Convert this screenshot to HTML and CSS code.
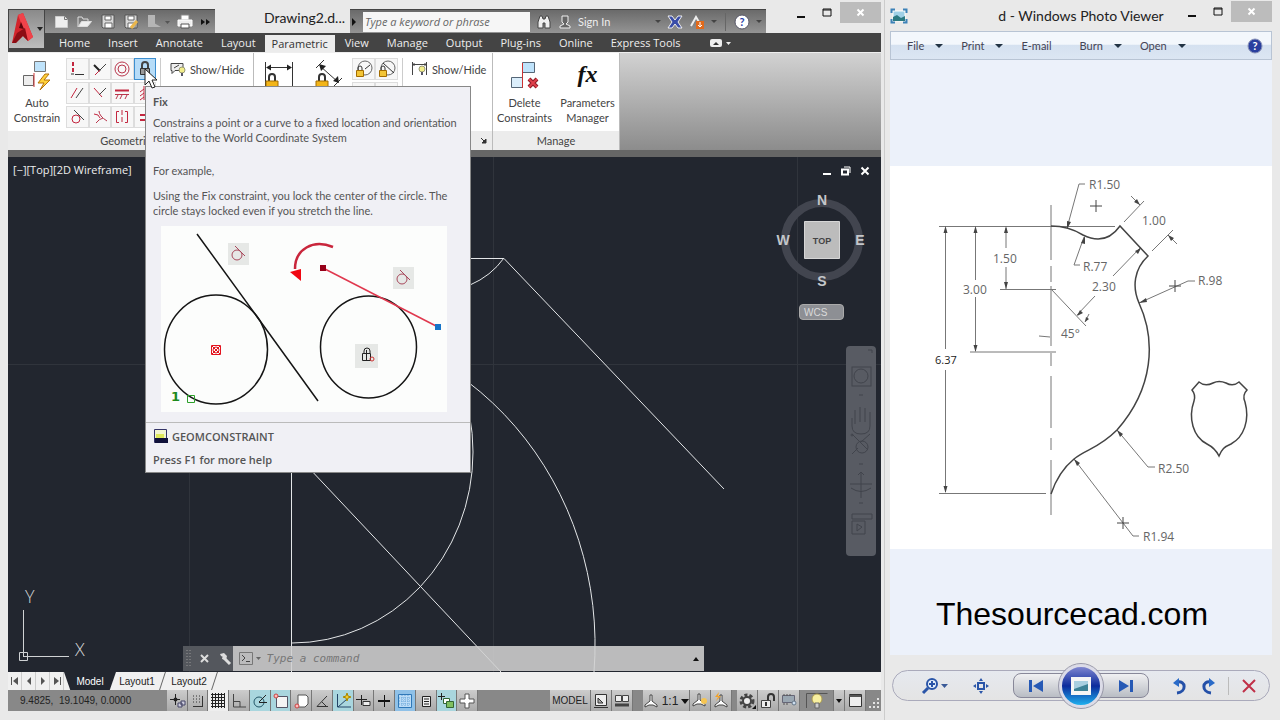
FILE: index.html
```html
<!DOCTYPE html>
<html lang="en">
<head>
<meta charset="UTF-8">
<meta name="viewport" content="width=device-width, initial-scale=1.0">
<title>Drawing2</title>
<link rel="stylesheet" href="styles.css">
</head>
<body>
<div class="desktop">

<!-- CAD window -->
<section class="cad">
  <header class="cad-title">
    <div class="quick">
      <button aria-label="New"><svg width="16" height="16"><path d="M1.500 2.500h9l3 3v8h-12z" fill="#eee" stroke="#ccc"/><path d="M10.500 2.500v3h3" fill="none" stroke="#777"/></svg></button>
      <button aria-label="Open"><svg width="16" height="16"><path d="M1 13V3h4l1 2h5v2" fill="none" stroke="#ddd"/><path d="M1.500 12.500l3-5h10l-4 5z" fill="#eee" stroke="#ddd"/></svg></button>
      <button aria-label="Save"><svg width="16" height="16"><path d="M2 1h12v13H3l-1-1z" fill="#d8d8d8" stroke="#555"/><path d="M5 2h6v4H5zM5 9h7v5H5z" fill="#fff" stroke="#666"/></svg></button>
      <button aria-label="Save As"><svg width="16" height="16"><path d="M2 1h12v13H3l-1-1z" fill="#d8d8d8" stroke="#555"/><path d="M5 2h6v4H5zM5 9h7v5H5z" fill="#fff" stroke="#666"/><path d="M8 14l6-7" stroke="#e9b64c" stroke-width="3"/></svg></button>
      <button aria-label="Plot"><svg width="24" height="16"><path d="M2 1h7v12H2zM8 9l7 4H5z" fill="#b5b5b5"/><path d="M19 7h5l-2.500 3z" fill="#555"/></svg></button>
      <button aria-label="Print"><svg width="16" height="16"><path d="M4 1h8v5H4z" fill="#fff" stroke="#888"/><path d="M1 6h14v6H1z" fill="#eee" stroke="#fff"/><path d="M4 10h8v4H4z" fill="#fff" stroke="#555"/></svg></button>
      <button aria-label="More"><svg width="12" height="10"><path d="M1 2l4 3-4 3zM6 2l4 3-4 3z" fill="#111"/></svg></button>
    </div>
    <h1 class="cad-name">Drawing2.d...</h1>
    <div class="info-bar">
      <button class="info-arrow" aria-label="Expand"><svg width="6" height="8"><path d="M1 0l4 4-4 4z" fill="#111"/></svg></button>
      <input class="search" type="text" placeholder="Type a keyword or phrase" aria-label="Search">
      <button aria-label="Find"><svg width="16" height="16"><path d="M2 14V8l2-6h2l1 3h2l1-3h2l2 6v6H9V9H7v5z" fill="#eee" stroke="#444"/></svg></button>
      <button class="sign-in"><svg width="14" height="16"><path d="M4 2h6v6l-2 2 4 2v2H2v-2l4-2-2-2z" fill="#666" stroke="#eee"/></svg>Sign In</button>
      <span class="caret push"></span>
      <button aria-label="Exchange"><svg width="16" height="14"><path d="M1 1h4l3 4 3-4h4l-4 6 4 6h-4L8 9l-3 4H1l4-6z" fill="#3a4da8" stroke="#eee"/></svg></button>
      <button aria-label="Updates"><svg width="16" height="16"><path d="M2 12l5-9 3 5" fill="none" stroke="#eee" stroke-width="2"/><path d="M7 7h8v8H7z" fill="#e06a1c"/><path d="M11 8v5M9 11l2 2 2-2" stroke="#fff" fill="none"/></svg></button>
      <span class="caret"></span>
      <span class="bar"></span>
      <button aria-label="Help"><svg width="16" height="16"><circle cx="8" cy="8" r="7" fill="#fff" stroke="#556"/><text x="8" y="12" text-anchor="middle" font-size="11" font-weight="700" fill="#2a41a8">?</text></svg></button>
      <span class="caret"></span>
    </div>
    <div class="win-buttons">
      <button aria-label="Minimize"><svg width="10" height="12"><path d="M1 9h8v2H1z" fill="#111"/></svg></button>
      <button aria-label="Maximize"><svg width="10" height="9"><path d="M1 1h8v7H1zM1 2h8" fill="none" stroke="#111"/></svg></button>
      <button class="close" aria-label="Close"><svg width="10" height="10"><path d="M1.500 1.500l6 6M7.500 1.500l-6 6" stroke="#fff" stroke-width="2"/></svg></button>
    </div>
  </header>

  <button class="app-menu" aria-label="Application menu">
    <svg width="36" height="38"><path d="M3 33L9 5l5-2 10 24-5 4-5-5-6 1-1 6z" fill="#d3242b"/><path d="M9 5l5-2 10 24-5 4z" fill="#f0434a"/><path d="M3 33l5-10 8-5 3 13-5-5-7 7z" fill="#8d0d14"/><path d="M10 18l2-6 3 7z" fill="#5e060c"/><path d="M28 17h6l-3 4z" fill="#222"/></svg>
  </button>

  <nav class="tabs">
    <button>Home</button>
    <button>Insert</button>
    <button>Annotate</button>
    <button>Layout</button>
    <button class="on">Parametric</button>
    <button>View</button>
    <button>Manage</button>
    <button>Output</button>
    <button>Plug-ins</button>
    <button>Online</button>
    <button>Express Tools</button>
    <button class="fold" aria-label="Minimize ribbon"><svg width="22" height="10"><rect y="1" width="12" height="8" rx="2" fill="#eee"/><path d="M3 7l3-3 3 3z" fill="#333"/><path d="M16 4h5l-2.500 3z" fill="#eee"/></svg></button>
  </nav>

  <div class="ribbon">
    <div class="panel geometric">
      <div class="panel-body">
        <button class="big">
          <svg width="32" height="34"><path d="M13.500 3.500h11v10h-11z" fill="#bfe3fb" stroke="#777"/><path d="M2.500 17.500h10v10h-10z" fill="#eee" stroke="#666"/><path d="M13 15v14" stroke="#c33"/><path d="M24 16l-7 9h6l-4 7 10-10h-6l5-6z" fill="#ffd23c" stroke="#b5720a"/></svg>
          <span>Auto<br>Constrain</span>
        </button>
        <div class="grid">
          <button aria-label="Coincident"><svg width="18" height="18"><path d="M5 2v10" stroke="#c3263f" stroke-width="2" stroke-dasharray="4 2"/><path d="M3 14h3M7 14.500h9" stroke="#333"/></svg></button>
          <button aria-label="Collinear"><svg width="18" height="18"><path d="M3 5l6 6" stroke="#222" stroke-width="2"/><path d="M4 15l5-5" stroke="#c3263f"/><path d="M9 10l6-6" stroke="#444"/></svg></button>
          <button aria-label="Concentric"><svg width="18" height="18" fill="none" stroke="#b9364c"><circle cx="9" cy="9" r="7"/><circle cx="9" cy="9" r="4"/></svg></button>
          <button aria-label="Fix" class="hot"><svg width="18" height="18"><path d="M6 9V5a3 3 0 0 1 6 0v4" fill="none" stroke="#444" stroke-width="2"/><path d="M4.500 8.500h9v6h-9z" fill="#999" stroke="#333"/></svg></button>
          <button aria-label="Parallel"><svg width="18" height="18"><path d="M3 14L9 4" stroke="#c3263f"/><path d="M8 14l7-10" stroke="#444"/></svg></button>
          <button aria-label="Perpendicular"><svg width="18" height="18"><path d="M3 4l8 9" stroke="#c3263f"/><path d="M15 4L8 11" stroke="#444" fill="none"/></svg></button>
          <button aria-label="Horizontal"><svg width="18" height="18"><path d="M2 6.500h14" stroke="#c3263f" stroke-width="2"/><path d="M2 10.500h14M5 11l-2 4M9 11l-2 4M14 11l-2 4" stroke="#b9364c"/></svg></button>
          <button aria-label="Vertical"><svg width="18" height="18"><path d="M8 2v14M12 2v14M8 5l-4 3M8 9l-4 3M8 13l-4 3" stroke="#c3263f"/></svg></button>
          <button aria-label="Tangent"><svg width="18" height="18" fill="none"><circle cx="8" cy="11" r="4" stroke="#c3263f"/><path d="M6 2l10 10" stroke="#444"/></svg></button>
          <button aria-label="Smooth"><svg width="18" height="18" fill="none"><path d="M3 6q5 0 6 4" stroke="#c3263f"/><path d="M8 3q0 5 8 10M5 15q3-4 7-5" stroke="#b9364c"/></svg></button>
          <button aria-label="Symmetric"><svg width="18" height="18" fill="none" stroke="#c3263f"><path d="M6 3.500H3.500v11H6M12 3.500h2.500v11H12"/><path d="M9 2v14" stroke-dasharray="5 2"/></svg></button>
          <button aria-label="Equal"><svg width="18" height="18" stroke="#c3263f" stroke-width="2"><path d="M4 7h12M4 12h12"/></svg></button>
        </div>
        <div class="rows">
          <button><svg width="18" height="18"><path d="M2 3.500h12v7H6l-3 3v-3H2z" fill="#eee" stroke="#444"/><path d="M5 8l5-3" stroke="#444"/><circle cx="13" cy="10" r="3" fill="#f3ee8a" stroke="#997"/><path d="M12 13h2v3h-2z" fill="#556"/></svg>Show/Hide</button>
          <button aria-label="Show All"><svg width="18" height="18"><path d="M3 4.500h12v8H3z" fill="#ddd" stroke="#444" stroke-width="2"/></svg></button>
        </div>
      </div>
      <h2>Geometric</h2>
    </div>

    <div class="panel dimensional">
      <div class="panel-body">
        <button class="big" aria-label="Linear"><svg width="32" height="34"><path d="M2.500 4v26M29.500 4v26" stroke="#333"/><path d="M4 9.500h24" stroke="#333"/><path d="M3 9.500l5-3v6zM29 9.500l-5-3v6z" fill="#222"/><path d="M6 24v-5a3 3 0 0 1 6 0v5" fill="none" stroke="#333" stroke-width="2"/><path d="M3 23h12v9H3z" fill="#f3b518" stroke="#a36c00"/></svg></button>
        <button class="big" aria-label="Aligned"><svg width="32" height="34"><path d="M8 8l18 16M4 10l8-8M22 28l8-8" stroke="#333"/><path d="M7 6l7 2-5 5zM27 25l-6-2 5-5z" fill="#222"/><path d="M7 25v-6a3 3 0 0 1 6 0v6" fill="none" stroke="#333" stroke-width="2"/><path d="M4 23h12v9H4z" fill="#f3b518" stroke="#a36c00"/></svg></button>
        <div class="grid pair">
          <button aria-label="Radius"><svg width="18" height="18"><circle cx="10" cy="8" r="7" fill="none" stroke="#666"/><path d="M3 11V8a2 2 0 0 1 4 0v3M10 9l5-4" fill="none" stroke="#333"/><path d="M1.500 10.500h7v6h-7z" fill="#f3c536" stroke="#a36c00"/></svg></button>
          <button aria-label="Diameter"><svg width="18" height="18"><circle cx="10" cy="8" r="7" fill="none" stroke="#666"/><path d="M3 11V8a2 2 0 0 1 4 0v3M5 3l11 10" fill="none" stroke="#333"/><path d="M1.500 10.500h7v6h-7z" fill="#f3c536" stroke="#a36c00"/></svg></button>
          <button aria-label="Angular"></button>
          <button aria-label="Convert"></button>
        </div>
        <div class="rows">
          <button><svg width="18" height="18"><path d="M1.500 2v13M15.500 2v13M2 4.500h13M3 3v3M14 3v3" stroke="#444"/><circle cx="11" cy="9" r="3" fill="#f3ee8a" stroke="#997"/><path d="M10 12h2v3h-2z" fill="#556"/></svg>Show/Hide</button>
        </div>
      </div>
      <h2><svg class="launcher" width="8" height="8"><path d="M1 1l4 4M6 2v4H2z" fill="#333" stroke="#333"/></svg></h2>
    </div>

    <div class="panel manage">
      <div class="panel-body">
        <button class="big">
          <svg width="32" height="34"><path d="M13.500 4.500h12v10h-12z" fill="#bfe3fb" stroke="#567"/><path d="M2.500 19.500h11v10h-11z" fill="#dbeefb" stroke="#567"/><path d="M13.500 5v25" stroke="#c33"/><path d="M20 21l8 8M28 21l-8 8" stroke="#8d1a24" stroke-width="4"/><path d="M20 21l8 8M28 21l-8 8" stroke="#e0404c" stroke-width="2"/></svg>
          <span>Delete<br>Constraints</span>
        </button>
        <button class="big">
          <b class="fx">fx</b>
          <span>Parameters<br>Manager</span>
        </button>
      </div>
      <h2>Manage</h2>
    </div>
  </div>

  <main class="canvas">
    <svg class="model" width="100%" height="100%">
      <g transform="translate(-8 -157)" fill="none" stroke="#e4e6e8">
        <path d="M189.500 157v515M493.500 157v515M797.500 157v515M8 364.500h880" stroke="#30343c"/>
        <path d="M470 258.500h34L724 489"/>
        <path d="M504 258q-13 18-34 27"/>
        <path d="M292 261A181 191 0 0 1 292 643"/>
        <path d="M292 322A303 323 0 0 1 594 672"/>
        <path d="M291.500 258v414M292 450l209 222"/>
        <path d="M23.500 610v47M23 656.500h46M19.500 652.500h8v8h-8z" stroke="#d0d2d4"/>
        <g fill="#d0d2d4" stroke="none" class="ucs"><text x="25" y="603">Y</text><text x="75" y="656">X</text></g>
      </g>
    </svg>
    <div class="view-label">[−][Top][2D Wireframe]</div>
    <div class="doc-buttons">
      <button aria-label="Minimize drawing"><svg width="10" height="10"><path d="M1 7h8v2H1z" fill="#fff"/></svg></button>
      <button aria-label="Restore drawing"><svg width="10" height="10" fill="none" stroke="#fff"><path d="M1 3.500h6v5H1z" stroke-width="2"/><path d="M3 1h6v6"/></svg></button>
      <button aria-label="Close drawing"><svg width="10" height="10"><path d="M1.500 1.500l7 7M8.500 1.500l-7 7" stroke="#fff" stroke-width="2"/></svg></button>
    </div>
    <div class="compass">
      <svg width="96" height="100">
        <circle cx="48" cy="50" r="37" fill="none" stroke="#42454f" stroke-width="8"/>
        <path d="M30.500 31.500h35v37h-35z" fill="#bcbcbc" stroke="#d6d6d6"/>
        <g class="points"><text x="48" y="15">N</text><text x="48" y="96">S</text><text x="9" y="55">W</text><text x="86" y="55">E</text></g>
        <text class="top" x="48" y="54">TOP</text>
      </svg>
      <button class="wcs">WCS</button>
    </div>
    <div class="nav-bar">
      <svg width="30" height="210" fill="none" stroke="#41444c">
        <rect x="6" y="21" width="19" height="19"/><circle cx="15" cy="30" r="7"/>
        <path d="M6 72v8q0 8 9 8t9-8V66M9 78V64M14 76V61M19 76V62"/>
        <path d="M6 88l16 16M24 88l-9 8M6 108l6-6"/><circle cx="16" cy="101" r="6"/><circle cx="6" cy="89" r="1"/>
        <path d="M4 138h22M15 126v26M5 142q10 7 20 0M12 129l3-3 3 3"/>
        <path d="M6 168h20v5H6zM6 175h13v13H6zM11 178v7l5-4z"/>
        <path d="M13 49h4M13 118h4M13 157h4M22 4h4v3"/>
      </svg>
    </div>
    <div class="command">
      <div class="command-tools">
        <svg width="6" height="18"><path d="M1 0v18M4 0v18" stroke="#999" stroke-dasharray="1 2"/></svg>
        <button aria-label="Close command line"><svg width="12" height="12"><path d="M2 2l7 7M9 2L2 9" stroke="#ddd" stroke-width="2"/></svg></button>
        <button aria-label="Customize"><svg width="14" height="14"><path d="M5 5l7 7" stroke="#ddd" stroke-width="3"/><path d="M2 2l4-1 3 3-1 4-4-1 1-2-2-1z" fill="#ddd"/></svg></button>
      </div>
      <label class="prompt" for="cmd" aria-label="Command"><svg width="24" height="14"><path d="M.5.5h13v12H.5z" fill="none" stroke="#777"/><path d="M3 3l3 3-3 3M7 9.500h4" fill="none" stroke="#444"/><path d="M17 5h5l-2.500 3z" fill="#666"/></svg></label>
      <input id="cmd" type="text" placeholder="Type a command">
      <button class="history" aria-label="History"><svg width="8" height="6"><path d="M1 5l3-4 3 4z" fill="#111"/></svg></button>
    </div>
  </main>

  <nav class="sheets">
    <button aria-label="First"><svg width="10" height="10"><path d="M1.500 1v8" stroke="#555"/><path d="M8 1v8L3 5z" fill="#555"/></svg></button>
    <button aria-label="Previous"><svg width="6" height="10"><path d="M5 1v8L1 5z" fill="#555"/></svg></button>
    <button aria-label="Next"><svg width="6" height="10"><path d="M1 1v8l4-4z" fill="#555"/></svg></button>
    <button aria-label="Last"><svg width="10" height="10"><path d="M8.500 1v8" stroke="#555"/><path d="M2 1v8l5-4z" fill="#555"/></svg></button>
    <button class="sheet on">Model</button>
    <button class="sheet">Layout1</button>
    <button class="sheet">Layout2</button>
  </nav>

  <footer class="status">
    <span class="coords">9.4825, &nbsp;19.1049, 0.0000</span>
    <div class="toggles">
      <button aria-label="Infer"><svg width="18" height="18"><path d="M2 7.500h10M7.500 2v11" stroke="#222"/><circle cx="7.500" cy="7.500" r="2" fill="#222"/><path d="M10 11h4v4h-4zM13 9h4v4h-4z" fill="#ccd" stroke="#446"/></svg></button>
      <button aria-label="Snap"><svg width="18" height="18"><path d="M4 4h8M4 7h8M4 10h8" stroke="#333" stroke-dasharray="1 2"/><path d="M4 14.500h10M13.500 4v10" stroke="#333"/></svg></button>
      <button class="lit" aria-label="Grid"><svg width="18" height="18"><path d="M2 2.500h14M2 5.500h14M2 8.500h14M2 11.500h14M2 14.500h14M3.500 1v15M6.500 1v15M9.500 1v15M12.500 1v15M15.500 1v15" stroke="#222"/></svg></button>
      <button aria-label="Ortho"><svg width="18" height="18"><path d="M3.500 2v13H16M4 9.500h6V15" fill="none" stroke="#444"/></svg></button>
      <button class="cyan" aria-label="Polar"><svg width="18" height="18"><circle cx="8" cy="10" r="5" fill="none" stroke="#256"/><path d="M8 10l7-7M8 10.500h8" stroke="#222"/></svg></button>
      <button class="cyan" aria-label="Object snap"><svg width="18" height="18"><path d="M4.500 4.500h11v11h-11z" fill="#f4f4f4" stroke="#556"/><circle cx="4" cy="4" r="2" fill="#fbb" stroke="#c44"/></svg></button>
      <button aria-label="3D object snap"><svg width="18" height="18"><path d="M6 3h8l2 2v7l-3 3H6z" fill="#fff" stroke="#555"/><circle cx="5" cy="14" r="2" fill="#fbb" stroke="#c44"/></svg></button>
      <button aria-label="Tracking"><svg width="18" height="18"><path d="M14 4L4 14.500h11M9 10l4 4" fill="none" stroke="#333"/></svg></button>
      <button class="cyan" aria-label="Dynamic UCS"><svg width="18" height="18"><path d="M3.500 2v13H17M4 15l9-8" fill="none" stroke="#246"/><path d="M13 1l1 3 3 1-3 1-1 3-1-3-3-1 3-1z" fill="#f4cd2a" stroke="#a80"/></svg></button>
      <button aria-label="Dynamic input"><svg width="18" height="18"><path d="M2 7.500h11M7.500 3v10" stroke="#222"/><path d="M9 9.500h7v4H9z" fill="#eee" stroke="#333"/></svg></button>
      <button aria-label="Lineweight"><svg width="18" height="18"><path d="M3 9h12" stroke="#111" stroke-width="2"/><path d="M9.500 3v12" stroke="#111"/></svg></button>
      <button class="blue" aria-label="Transparency"><svg width="18" height="18"><path d="M2.500 2.500h13v13h-13z" fill="#bcdcf6" stroke="#2f78b8"/><path d="M3 6h12M3 9h12M3 12h12M6 3v12M9 3v12M12 3v12" stroke="#6aa7da" stroke-dasharray="1 1"/></svg></button>
      <button aria-label="Quick properties"><svg width="18" height="18"><path d="M5.500 4.500h8v10h-8z" fill="#eee" stroke="#222"/><path d="M7 7h5M7 9.500h5M7 12h5" stroke="#222"/></svg></button>
      <button class="cyan" aria-label="Selection cycling"><svg width="18" height="18"><path d="M1 4.500h7M4.500 1v7" stroke="#222"/><path d="M6.500 6.500h6v5h-6z" fill="#fff" stroke="#363"/><path d="M9.500 9.500h7v6h-7z" fill="#7fbf5f" stroke="#363"/></svg></button>
      <button aria-label="Annotation monitor"><svg width="18" height="18"><path d="M7 2h4v5h5v4h-5v5H7v-5H2V7h5z" fill="#fff" stroke="#555"/></svg></button>
    </div>
    <div class="right-tools">
      <button class="model-btn">MODEL</button>
      <button aria-label="Quick view layouts"><svg width="18" height="18"><path d="M3.500 2.500h11v11h-11z" fill="#eee" stroke="#333"/><path d="M6 6v5h5zM2 15.500h14" fill="#aaa" stroke="#333"/></svg></button>
      <button aria-label="Quick view drawings"><svg width="18" height="18"><path d="M2.500 3.500h6v6h-6zM9.500 3.500h6v6h-6z" fill="#eee" stroke="#444"/><path d="M2 13h14" stroke="#444" stroke-width="3"/></svg></button>
      <span class="notch"></span>
      <button class="scale"><svg width="16" height="16"><path d="M7 2h2v6l5 4v2l-4-2H6l-4 2v-2l5-4z" fill="#fff" stroke="#444"/></svg>1:1<svg width="8" height="8"><path d="M0 2h8L4 7z" fill="#111"/></svg></button>
      <button aria-label="Annotation visibility"><svg width="18" height="18"><path d="M7 2h2v6l5 4v2l-4-2H6l-4 2v-2l5-4z" fill="#fff" stroke="#444"/><circle cx="13" cy="9" r="3" fill="#f6c552"/></svg></button>
      <button aria-label="Add scales"><svg width="18" height="18"><path d="M8 3h2v6l5 4v2l-4-2H7l-4 2v-2l5-4z" fill="#fff" stroke="#444"/><path d="M7 0L3 5h3l-2 4 5-5H6z" fill="#f2a32b"/></svg></button>
      <span class="notch thin"></span>
      <button aria-label="Workspace"><svg width="18" height="18"><circle cx="9" cy="9" r="6" fill="none" stroke="#444" stroke-width="3" stroke-dasharray="3 2"/><circle cx="9" cy="9" r="4" fill="#eee" stroke="#444" stroke-width="2"/><path d="M14 17h4v-4z" fill="#111"/></svg></button>
      <button aria-label="Lock"><svg width="18" height="18"><path d="M2.500 8.500h9v7h-9z" fill="#eee" stroke="#444"/><path d="M9 8V5a3 3 0 0 1 6 0v4M7 10v4" fill="none" stroke="#333" stroke-width="2"/></svg></button>
      <button aria-label="Hardware"><svg width="18" height="18"><path d="M2.500 3.500h12v7h-12z" fill="#9aa7b2" stroke="#667"/><path d="M4 2v2M7 2v2M10 2v2M4 11v2M7 11v2" stroke="#555"/><circle cx="14" cy="11" r="2" fill="#cde" stroke="#678"/></svg></button>
      <button class="isolate" aria-label="Isolate objects"><svg width="24" height="18"><path d="M1.500 16V1.500h21" fill="none" stroke="#555"/><circle cx="12" cy="7" r="5" fill="#f8f0a0" stroke="#aa9a50"/><path d="M10 11h4v5h-4z" fill="#ccc" stroke="#666"/></svg></button>
      <button class="slim" aria-label="Menu"><svg width="8" height="8"><path d="M1 2h6L4 6z" fill="#111"/></svg></button>
      <button aria-label="Clean screen"><svg width="18" height="18"><path d="M3.500 2.500h12v12h-12z" fill="#eee" stroke="#333"/><path d="M3 4h12" stroke="#555" stroke-width="2"/></svg></button>
      <svg class="grip" width="15" height="21" fill="#e4e4e4"><path d="M11 8h2v2h-2zM7 12h2v2H7zM11 12h2v2h-2zM3 16h2v2H3zM7 16h2v2H7zM11 16h2v2h-2z"/></svg>
    </div>
  </footer>

  <div class="tooltip" role="tooltip">
    <h3>Fix</h3>
    <p>Constrains a point or a curve to a fixed location and orientation<br>relative to the World Coordinate System</p>
    <p class="example">For example,</p>
    <p>Using the Fix constraint, you lock the center of the circle. The<br>circle stays locked even if you stretch the line.</p>
    <svg class="figure" width="286" height="186" viewBox="161 226 286 186">
      <path fill="#fcfdfc" d="M161 226h286v186H161z"/>
      <g fill="none" stroke="#151515" stroke-width="1.500">
        <ellipse cx="216" cy="349.500" rx="51.500" ry="54.500"/>
        <ellipse cx="368.500" cy="347" rx="48" ry="51"/>
        <path d="M197 234l61 84 60 83"/>
      </g>
      <path d="M323 268l115 59" stroke="#e0384e" stroke-width="1.500"/>
      <path d="M320 265h6v6h-6z" fill="#960018"/>
      <path d="M435 324h6v6h-6z" fill="#1674c8"/>
      <path d="M333 247c-20-8-38 2-38 22" fill="none" stroke="#c9263c" stroke-width="2.500"/>
      <path d="M290 272l11-3v12z" fill="#f00712"/>
      <path d="M228 243h21v22h-21zM393 267h21v22h-21zM355 344h23v24h-23z" fill="#e6e8e6"/>
      <g fill="none" stroke="#a8495c">
        <circle cx="237" cy="255" r="5"/><path d="M235 246l10 10"/>
        <circle cx="402" cy="279" r="5"/><path d="M400 270l10 10"/>
      </g>
      <path d="M364 353v-2a3 3 0 0 1 6 0v2M362.500 353.500h8v7h-8zM366.500 350v10" fill="none" stroke="#222"/>
      <circle cx="372" cy="359" r="2" fill="none" stroke="#c33"/>
      <path d="M211.500 345.500h9v9h-9zM212 346l8 8M220 346l-8 8" fill="none" stroke="#e3141f"/>
      <circle cx="216" cy="350" r="3" fill="none" stroke="#e3141f"/>
      <path d="M187.500 395.500h7v7h-7z" fill="none" stroke="#2da02a"/>
      <text x="171" y="401" class="one">1</text>
    </svg>
    <div class="tip-foot">
      <div><svg width="16" height="16"><path d="M1.500 1.500h12v13h-12z" fill="#f3f6d0" stroke="#336"/><path d="M3 6h8v4H3z" fill="#dfe85a"/><path d="M2 10h13v5H2z" fill="#11123a"/></svg>GEOMCONSTRAINT</div>
      <div>Press F1 for more help</div>
    </div>
  </div>
  <svg class="pointer" width="14" height="22"><path d="M1 1v16l4-4 3 7 3-1-3-7h5z" fill="#fff" stroke="#222"/></svg>
</section>

<!-- Photo viewer window -->
<section class="viewer">
  <header class="viewer-title">
    <svg width="18" height="16"><path d="M3 3h12v10H3z" fill="#9fd0e6" stroke="#fff"/><path d="M3 9l4-2 4 3 4-2v5H3z" fill="#2c7a82"/><path d="M1.500 5V1.500H5M13 1.500h3.500V5M16.500 11v3.500H13M5 14.500H1.500V11" fill="none" stroke="#3c82b8" stroke-width="2"/></svg>
    <h1>d - Windows Photo Viewer</h1>
    <div class="win-buttons">
      <button aria-label="Minimize"><svg width="10" height="12"><path d="M1 9h8v2H1z" fill="#111"/></svg></button>
      <button aria-label="Maximize"><svg width="10" height="9"><path d="M1 1h8v7H1zM1 2h8" fill="none" stroke="#111"/></svg></button>
      <button class="close" aria-label="Close"><svg width="10" height="10"><path d="M1.500 1.500l6 6M7.500 1.500l-6 6" stroke="#fff" stroke-width="2"/></svg></button>
    </div>
  </header>
  <nav class="menu">
    <button>File<i></i></button>
    <button>Print<i></i></button>
    <button class="plain">E-mail</button>
    <button>Burn<i></i></button>
    <button>Open<i></i></button>
    <button class="help" aria-label="Help"><svg width="16" height="16"><circle cx="8" cy="8" r="7" fill="#2a3f9e" stroke="#8a93b8"/><text x="8" y="12" text-anchor="middle" font-size="11" font-weight="700" fill="#fff">?</text></svg></button>
  </nav>
  <div class="photo">
    <svg class="sheet-drawing" viewBox="890 166 382 383">
      <path fill="#fff" d="M890 166h382v383H890z"/>
      <g fill="none" stroke="#777">
        <path d="M939 226.500h176M939 493.500h107M945.500 228v121M945.500 370v122M975.500 228v52M975.500 297v54M1006 228v20M1006 267v22M1000 289.500h56M970 352h86"/>
        <path d="M1051 205v55M1051 266v16M1051 286v60M1051 353v13M1051 376v52M1051 438v12M1051 460v55"/>
        <path d="M1051 289l35 37M1077 315l18-19M1113 276l28-29M1124 222l20-21M1131 196l9 9M1152 251l21-21M1168 235l9 9M1089 314l-4 8"/>
        <path d="M1067 228l12-44h6M1084 237l-10 28h6M1139 303l49-22h7M1117 430l31 37h7M1074 459l59 77h6M1039 336l11 1"/>
        <path d="M1090 206h12M1096 200v12M1169 286h12M1175 280v12M1117 523h12M1123 517v12" stroke="#444"/>
      </g>
      <path d="M945.500 226l-2 7h4zM975.500 226l-2 7h4zM1006 226l-2 7h4zM945.500 493l-2-7h4zM975.500 352l-2-7h4zM1006 289l-2-7h4zM1067 229l0-8 4 1zM1085 236l-4 7 4 1zM1139 303l7-5 1 4zM1117 430l3 7 3-3zM1074 459l3 7 3-3zM1077 316l3-6 3 3zM1141 248l-6 3 3 3zM1140 205l-6-3 3-3zM1168 235l3 6 3-3zM1085 322l1-5 3 2z" fill="#444"/>
      <path d="M1051 226C1066 226 1075 230 1083 235C1097 242 1110 240 1120 226L1148 256C1134 269 1132 287 1139 303C1156 340 1154 388 1117 430C1098 449 1086 449 1074 459C1063 468 1056 479 1051 494" fill="none" stroke="#444" stroke-width="1.500"/>
      <path d="M1199 382q6 5 14 1 6-3 13 0 7 4 13-1l8 8q-5 5-2 12c5 18-1 35-14 42-7 3-9 5-12 12q-4-8-12-12c-14-7-19-26-13-43q2-6-2-11z" fill="none" stroke="#444" stroke-width="1.500"/>
      <g class="dims"><text x="1089" y="189">R1.50</text><text x="1142" y="225">1.00</text><text x="993" y="263">1.50</text><text x="1083" y="271">R.77</text><text x="963" y="294">3.00</text><text x="1092" y="291">2.30</text><text x="1198" y="285">R.98</text><text x="1061" y="338">45°</text><text x="1158" y="473">R2.50</text><text x="1143" y="541">R1.94</text><text x="935" y="364" class="dark">6.37</text></g>
    </svg>
    <p class="caption">Thesourcecad.com</p>
  </div>
  <footer class="controls">
    <button aria-label="Zoom"><svg width="28" height="18"><circle cx="11" cy="7" r="5" fill="#e6f0fb" stroke="#2a55a8" stroke-width="2"/><path d="M11 4v6M8 7h6" stroke="#2a55a8" stroke-width="2"/><path d="M7 11l-5 5" stroke="#2a55a8" stroke-width="3"/><path d="M20 7h7l-3.500 4z" fill="#3a5a98"/></svg></button>
    <button aria-label="Fit"><svg width="18" height="18"><path d="M6 6h6v6H6z" fill="none" stroke="#2a55a8" stroke-width="2"/><path d="M9 1l2 3H7zM9 17l2-3H7zM1 9l3-2v4zM17 9l-3-2v4z" fill="#2a55a8"/></svg></button>
    <div class="player">
      <button aria-label="Previous"><svg width="14" height="12"><path d="M0 0h3v12H0zM14 0v12L4 6z" fill="#2659b5"/></svg></button>
      <button class="play" aria-label="Slide show"><svg width="22" height="20"><path d="M1 1h20v18H1z" fill="#f5f5f5"/><path d="M4 5h14v10H4z" fill="#a9cfe0"/><path d="M4 13l14-5v7H4z" fill="#3d8296"/></svg></button>
      <button aria-label="Next"><svg width="14" height="12"><path d="M11 0h3v12h-3zM0 0v12l10-6z" fill="#2659b5"/></svg></button>
    </div>
    <div class="edit">
      <button aria-label="Rotate left"><svg width="16" height="18"><path d="M5 5c9-2 10 10 0 11" fill="none" stroke="#2450a8" stroke-width="3"/><path d="M1 6l6-5v9z" fill="#2a6bc8"/></svg></button>
      <button aria-label="Rotate right"><svg width="16" height="18"><path d="M11 5C2 3 1 15 11 16" fill="none" stroke="#2450a8" stroke-width="3"/><path d="M15 6L9 1v9z" fill="#2a6bc8"/></svg></button>
      <span class="divider"></span>
      <button aria-label="Delete"><svg width="16" height="16"><path d="M2 2q6 6 12 12M14 2Q8 8 2 14" fill="none" stroke="#c03048" stroke-width="2"/></svg></button>
    </div>
  </footer>
</section>

</div>
</body>
</html>
```

FILE: styles.css
```css
* {
  box-sizing: border-box;
}

body {
  margin: 0;
  background: #e9e9e9;
  color: #444;
  font-family: Lato, "Open Sans", sans-serif;
  font-size: 11px;
}

h1, h2, h3, p {
  margin: 0;
  font-weight: normal;
}

button {
  display: flex;
  align-items: center;
  justify-content: center;
  padding: 0;
  border: none;
  background: none;
  color: inherit;
  font: inherit;
  white-space: nowrap;
}

svg {
  display: block;
  flex: none;
}

.desktop {
  display: flex;
  min-height: 100vh;
}

/* ---------- CAD window ---------- */
.cad {
  position: relative;
  flex: 1;
  min-width: 0;
  display: flex;
  flex-direction: column;
  padding: 0 3px 9px 8px;
}

.cad-title {
  display: flex;
  align-items: flex-end;
  height: 33px;
}

.quick {
  display: flex;
  align-items: center;
  gap: 7px;
  width: 170px;
  height: 24px;
  margin-left: 37px;
  padding-left: 9px;
  background: linear-gradient(#6a6a6a, #949494);
  border-top: 1px solid #444;
}

.cad-name {
  width: 135px;
  padding: 0 5px 5px 0;
  color: #222;
  font-size: 14px;
  line-height: 20px;
  text-align: right;
  white-space: nowrap;
}

.info-bar {
  flex: 1;
  display: flex;
  align-items: center;
  gap: 6px;
  height: 24px;
  padding-right: 4px;
  background: linear-gradient(#6a6a6a, #949494);
  border-top: 1px solid #444;
}

.info-arrow {
  width: 7px;
}

.search {
  width: 167px;
  height: 20px;
  padding: 0 2px;
  border: none;
  background: #f6f6f6;
  font: italic 11px "Open Sans", sans-serif;
}

.search::placeholder {
  color: #666;
}

.sign-in {
  gap: 6px;
  color: #eee;
}

.caret {
  border: 3px solid transparent;
  border-top-color: #444;
  border-bottom: none;
}

.push {
  margin-left: auto;
}

.bar {
  width: 1px;
  height: 18px;
  margin: 0 2px;
  background: #666;
}

.win-buttons {
  display: flex;
  align-self: flex-start;
  height: 21px;
  margin-top: 2px;
  margin-left: 22px;
}

.win-buttons button {
  width: 26px;
}

.win-buttons .close {
  width: 41px;
  background: #bcbcbc;
}

.app-menu {
  position: absolute;
  top: 9px;
  left: 8px;
  width: 37px;
  height: 40px;
  border: 1px solid #444;
  background: linear-gradient(#8a8a8a, #bdbdbd);
}

.tabs {
  display: flex;
  height: 19px;
  padding-left: 42px;
  background: #444;
  color: #eee;
  font-family: "Open Sans", sans-serif;
}

.tabs button {
  padding: 0 9px;
}

.tabs .on {
  padding: 0 7px;
  margin: 2px 1px 0 0;
  background: #ececec;
  color: #333;
}

.tabs .fold {
  padding-left: 20px;
}

.ribbon {
  display: flex;
  height: 105px;
  background: linear-gradient(#d2d2d2, #8c8c8c);
  border-top: 1px solid #eee;
  border-bottom: 7px solid #666;
}

.panel {
  display: flex;
  flex-direction: column;
  background: #fff;
  border-right: 1px solid #bbb;
}

.panel h2 {
  display: flex;
  align-items: center;
  justify-content: center;
  height: 19px;
  background: #ececec;
  font-size: 11px;
}

.panel-body {
  flex: 1;
  display: flex;
  padding-top: 5px;
}

.geometric {
  width: 246px;
}

.geometric h2 {
  padding-right: 10px;
}

.dimensional {
  width: 239px;
}

.manage {
  width: 127px;
}

.big {
  flex-direction: column;
  justify-content: flex-start;
  width: 58px;
  line-height: 15px;
}

.manage .big {
  width: 63px;
}

.dimensional .big {
  width: 49px;
}

.big span {
  margin-top: 3px;
}

.fx {
  height: 34px;
  color: #111;
  font: italic bold 24px/32px "Liberation Serif", serif;
}

.grid {
  display: grid;
  grid-template-columns: repeat(4, 1fr);
  grid-auto-rows: 22px;
  row-gap: 2px;
  width: 90px;
  height: 70px;
}

.grid button {
  border: 1px solid #ddd;
  background: #f7f7f7;
}

.grid .hot {
  border-color: #3d8fd0;
  background: #b6dcf8;
}

.pair {
  grid-template-columns: 1fr 1fr;
  width: 46px;
}

.rows {
  display: flex;
  flex-direction: column;
  align-items: flex-start;
  gap: 2px;
  margin-left: 4px;
  padding-left: 8px;
  border-left: 1px solid #ccc;
}

.rows button {
  gap: 3px;
  height: 22px;
}

.panel .launcher {
  margin: 0 4px 0 auto;
}

/* ---------- drawing area ---------- */
.canvas {
  position: relative;
  flex: 1;
  background: #22262f;
  color: #eee;
}

.model {
  position: absolute;
  inset: 0;
}

.ucs {
  font: 300 18px "Open Sans", sans-serif;
}

.view-label {
  position: absolute;
  top: 5px;
  left: 5px;
  font-family: "Open Sans", sans-serif;
}

.doc-buttons {
  position: absolute;
  top: 9px;
  right: 11px;
  display: flex;
  gap: 9px;
}

.compass {
  position: absolute;
  top: 33px;
  right: 11px;
}

.points {
  fill: #c4c6ca;
  font: bold 14px "Liberation Sans", sans-serif;
  text-anchor: middle;
}

.top {
  fill: #444;
  font: bold 9px "Liberation Sans", sans-serif;
  text-anchor: middle;
}

.wcs {
  justify-content: flex-start;
  width: 45px;
  height: 16px;
  margin: 14px 0 0 25px;
  padding-left: 4px;
  border: 1px solid #aaa;
  border-radius: 4px;
  background: #8d8f94;
  color: #dadada;
  font: 10px "Liberation Sans", sans-serif;
}

.nav-bar {
  position: absolute;
  top: 189px;
  right: 5px;
  width: 30px;
  border-radius: 4px;
  background: #585b63;
}

.command {
  position: absolute;
  bottom: 1px;
  left: 20%;
  width: 60%;
  max-width: 521px;
  height: 25px;
  display: flex;
  align-items: center;
  background: rgba(208, 208, 208, 0.88);
}

.command-tools {
  display: flex;
  align-items: center;
  gap: 7px;
  width: 50px;
  height: 25px;
  padding-left: 3px;
  background: #54575d;
}

.prompt {
  padding-left: 6px;
}

.command input {
  flex: 1;
  min-width: 0;
  padding: 0 4px;
  border: none;
  background: none;
  font: italic 11px "DejaVu Sans Mono", monospace;
}

.command input::placeholder {
  color: #777;
}

.history {
  width: 16px;
}

/* ---------- layout tabs and status bar ---------- */
.sheets {
  display: flex;
  height: 18px;
  background: #f0f0f0;
  color: #222;
  font: 10px "Liberation Sans", sans-serif;
}

.sheets button {
  width: 14px;
  border-right: 1px solid #ccc;
}

.sheets .sheet {
  position: relative;
  width: 52px;
  border: none;
}

/* slanted edge between two sheet tabs */
.sheets .sheet::after {
  content: "";
  position: absolute;
  top: 0;
  right: 0;
  width: 1px;
  height: 100%;
  background: #666;
  transform: skewX(-18deg);
}

.sheets .on {
  background: #22262f;
  color: #fff;
  clip-path: polygon(0 0, 100% 0, 88% 100%, 12% 100%);
}

.sheets .on + .sheet {
  margin-left: -5px;
}

.status {
  display: flex;
  height: 21px;
  background: #888;
  color: #222;
  font: 10px "Liberation Sans", sans-serif;
}

.coords {
  width: 159px;
  padding-left: 12px;
  line-height: 22px;
  white-space: nowrap;
}

.toggles {
  display: grid;
  grid-template-columns: repeat(15, 1fr);
  width: 311px;
}

.status button {
  border-right: 1px solid #777;
  background: linear-gradient(#ccc, #aaa);
}

.status .lit {
  background: #eee;
}

.status .cyan {
  background: #a9d6de;
}

.status .blue {
  background: #8fc1e8;
}

.right-tools {
  display: flex;
  margin-left: auto;
}

.right-tools button {
  width: 21px;
}

.right-tools .model-btn {
  width: 41px;
}

.notch {
  width: 10px;
}

.thin {
  width: 5px;
}

.right-tools .scale {
  gap: 3px;
  width: 47px;
  font-size: 12px;
}

.right-tools .isolate {
  width: 34px;
  background: #8c8c8c;
}

.right-tools .slim {
  width: 11px;
}

/* ---------- tooltip ---------- */
.tooltip {
  position: absolute;
  top: 86px;
  left: 145px;
  width: 326px;
  padding: 7px 7px 0;
  border: 1px solid #888;
  background: #f0f0f5;
  color: #555;
  line-height: 15px;
  white-space: nowrap;
}

.tooltip h3 {
  margin-bottom: 6px;
  font-size: 11px;
  font-weight: bold;
}

.tooltip .example {
  margin: 18px 0 10px;
}

.figure {
  margin: 8px 0 10px 8px;
}

.one {
  fill: #1e8a1c;
  font: bold 13px "DejaVu Sans", sans-serif;
}

.tip-foot {
  margin: 0 -7px;
  padding: 5px 7px 5px;
  border-top: 1px solid #bbb;
  font: 600 11px "Open Sans", sans-serif;
}

.tip-foot div {
  display: flex;
  align-items: center;
  gap: 3px;
  height: 16px;
}

.tip-foot div + div {
  margin-top: 7px;
}

.pointer {
  position: absolute;
  top: 68px;
  left: 144px;
}

/* ---------- photo viewer ---------- */
.viewer {
  display: flex;
  flex-direction: column;
  width: 396px;
  padding: 0 8px 5px 5px;
  border-left: 1px solid #ccc;
}

.viewer-title {
  display: grid;
  grid-template-columns: 1fr auto 1fr;
  align-items: center;
  height: 31px;
}

.viewer-title h1 {
  color: #222;
  font-size: 14px;
  white-space: nowrap;
}

.viewer .win-buttons {
  justify-self: end;
  margin: 1px 0 0 0;
}

.menu {
  display: flex;
  align-items: center;
  height: 29px;
  padding: 0 8px 0 16px;
  border: 1px solid #b8c4d4;
  background: linear-gradient(#f3f7fc 45%, #d5e1f0 50%, #dce6f3);
  color: #445;
}

.menu button {
  margin-right: 18px;
}

.menu .plain {
  margin-right: 28px;
}

.menu i {
  margin-left: 11px;
  border: 4px solid transparent;
  border-top-color: #234;
  border-bottom: none;
}

.menu .help {
  margin: 0 0 0 auto;
}

.photo {
  flex: 1;
  padding-top: 106px;
  background: #ecf1fa;
}

.sheet-drawing {
  width: 100%;
}

.dims {
  fill: #666;
  font: 12px "Open Sans", sans-serif;
}

.dims .dark {
  fill: #222;
  font-size: 11px;
}

.caption {
  margin-top: 46px;
  padding-right: 18px;
  color: #000;
  font: 32px/38px "Liberation Sans", sans-serif;
  text-align: center;
}

.controls {
  display: flex;
  align-items: center;
  justify-content: center;
  gap: 23px;
  height: 31px;
  margin: 15px 2px 14px;
  padding-left: 15px;
  border: 1px solid #aab;
  border-radius: 16px;
  background: linear-gradient(#e6e9ef, #e4e4e4);
}

.edit {
  display: flex;
  align-items: center;
  gap: 12px;
}

.player {
  display: flex;
  align-items: center;
  justify-content: space-between;
  width: 136px;
  height: 25px;
  padding: 0 15px;
  border: 1px solid #889;
  border-radius: 8px;
  background: linear-gradient(#f0f0f2, #b9bdc4);
}

.player .play {
  width: 44px;
  height: 44px;
  border: 3px solid #dcdce8;
  border-radius: 50%;
  outline: 1px solid #99a;
  background: linear-gradient(#7f86d0, #0c2b9c 50%, #1fb0ee);
}

.divider {
  width: 1px;
  height: 18px;
  background: #bbb;
}
```
